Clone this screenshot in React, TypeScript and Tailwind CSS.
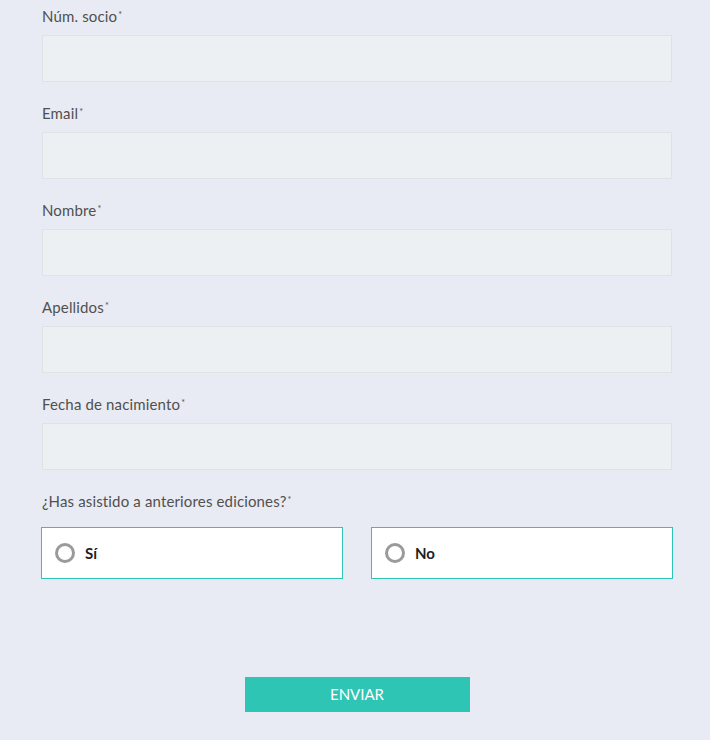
import React from "react"

const fields = ["Núm. socio", "Email", "Nombre", "Apellidos", "Fecha de nacimiento"]

function Label({ text }: { text: string }) {
	return (
		<label className="block h-5 text-[15px] leading-5 tracking-[0.15px] text-[#505050]">
			{text}
			<span className="ml-px align-[4px] text-[9px] leading-none text-[#505050]">*</span>
		</label>
	)
}

function Radio({ label }: { label: string }) {
	return (
		<div className="flex h-[52px] items-center border border-[#2ec4b6] bg-white pl-[13px]">
			<span className="box-border h-5 w-5 rounded-full border-[3px] border-[#9a9a9a] bg-white" />
			<span className="ml-[10px] text-[15px] font-bold text-[#1e1e1e]">{label}</span>
		</div>
	)
}

export default function App() {
	return (
		<div className="min-h-[740px] bg-[#e8ebf3] pl-[42px] pt-[6px] font-['Lato','Liberation_Sans',sans-serif]">
			<form className="w-[630px]">
				{fields.map((f) => (
					<div key={f} className="mb-[21px]">
						<Label text={f} />
						<input
							type="text"
							className="mt-[9px] block h-[47px] w-full border border-[#dfe3e6] bg-[#edf0f2] outline-none"
						/>
					</div>
				))}
				<Label text="¿Has asistido a anteriores ediciones?" />
				<div className="-ml-px mt-4 grid w-[632px] grid-cols-2 gap-[28px]">
					<Radio label="Sí" />
					<Radio label="No" />
				</div>
				<div className="mt-[98px] flex justify-center">
					<button
						type="button"
						className="h-[35px] w-[225px] bg-[#2ec5b5] text-[15px] uppercase text-white"
					>
						Enviar
					</button>
				</div>
			</form>
		</div>
	)
}
